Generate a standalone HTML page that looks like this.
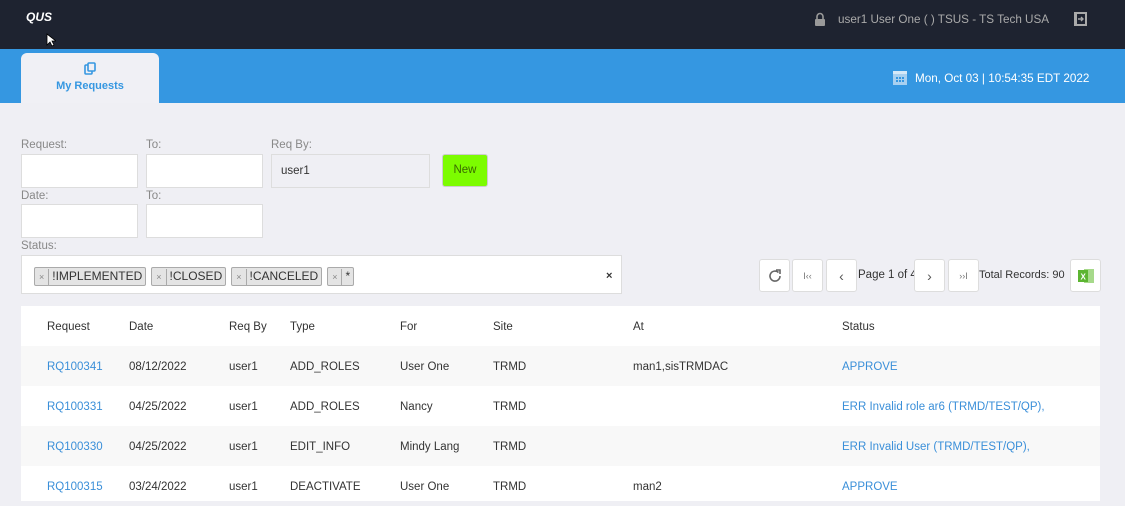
<!DOCTYPE html>
<html><head><style>
*{margin:0;padding:0;box-sizing:border-box}
body{width:1125px;height:501px;overflow:hidden;background:#efeff4;font-family:"Liberation Sans",sans-serif;font-size:11.5px;color:#333;position:relative}
.a{position:absolute}
.top{left:0;top:0;width:1125px;height:49px;background:#1e2330}
.blue{left:0;top:49px;width:1125px;height:54px;background:#3597e1}
.tab{left:21px;top:53px;width:138px;height:50px;background:#f0f0f5;border-radius:6px 6px 0 0;text-align:center;color:#3597e1;font-weight:bold;font-size:11px}
.lbl{color:#888;font-size:11.5px}
.inp{background:#fff;border:1px solid #ddd;height:34px}
.btn{background:#fff;border:1px solid #ddd;border-radius:3px;width:31px;height:33px;display:flex;align-items:center;justify-content:center;color:#555}
.tag{display:inline-block;border:1px solid #aaa;background:#e4e4e4;border-radius:2px;height:19px;line-height:17px;font-size:12px;margin-right:5px;color:#333}
.tag b{display:inline-block;font-weight:normal;color:#888;font-size:9px;padding:0 4px;border-right:1px solid #aaa}
.tag span{padding:0 3px}
table{position:absolute;left:21px;top:306px;width:1079px;border-collapse:collapse;font-size:11.5px}
td{height:40px;padding:0;color:#333;padding-top:2px}
tr:nth-child(2n) td{background:#f8f8f8}
tr td:first-child{padding-left:26px}
.lk{color:#3a8fd9}
</style></head><body>
<div class="a top"></div>
<div class="a" style="left:26px;top:10px;color:#fff;font-weight:bold;font-style:italic;font-size:12px">QUS</div>
<svg class="a" style="left:46px;top:33px" width="10" height="15"><path d="M1 1v11l3-3 2 4 2-1-2-4h4z" fill="#fff" stroke="#000" stroke-width=".8"/></svg>
<svg class="a" style="left:814px;top:12px" width="12" height="14"><path d="M3 7V4.5a3 3 0 016 0V7" fill="none" stroke="#999" stroke-width="1.6"/><rect x="1" y="7" width="10" height="7" rx="1" fill="#999"/></svg>
<div class="a" style="left:838px;top:13px;color:#aaa;font-size:11.7px">user1 User One ( ) TSUS - TS Tech USA</div>
<svg class="a" style="left:1074px;top:12px" width="13" height="14"><rect x="0" y="0" width="13" height="14" fill="#aaa"/><rect x="3" y="2" width="8" height="10" fill="#1e2330"/><path d="M4 7h5M7 5l2 2-2 2" stroke="#aaa" stroke-width="1.4" fill="none"/></svg>
<div class="a blue"></div>
<div class="a tab"><svg style="margin-top:9px" width="12" height="13"><rect x="1" y="3" width="7" height="9" rx="1" fill="none" stroke="#3597e1" stroke-width="1.6"/><rect x="4" y="1" width="7" height="8" rx="1" fill="#f0f0f5" stroke="#3597e1" stroke-width="1.6"/></svg><div style="margin-top:2px">My Requests</div></div>
<svg class="a" style="left:893px;top:71px" width="14" height="14"><rect x="0" y="0" width="14" height="14" fill="#a8d0f0"/><rect x="0" y="0" width="14" height="3" fill="#d6e9f8"/><g fill="#3597e1"><rect x="3" y="6" width="2" height="2"/><rect x="6" y="6" width="2" height="2"/><rect x="9" y="6" width="2" height="2"/><rect x="3" y="9" width="2" height="2"/><rect x="6" y="9" width="2" height="2"/><rect x="9" y="9" width="2" height="2"/></g></svg>
<div class="a" style="left:915px;top:72px;color:#fff;font-size:11.7px">Mon, Oct 03 | 10:54:35 EDT 2022</div>

<div class="a lbl" style="left:21px;top:139px">Request:</div>
<div class="a lbl" style="left:146px;top:139px">To:</div>
<div class="a lbl" style="left:271px;top:139px">Req By:</div>
<div class="a inp" style="left:21px;top:154px;width:117px"></div>
<div class="a inp" style="left:146px;top:154px;width:117px"></div>
<div class="a inp" style="left:271px;top:154px;width:159px;background:#efeff4;padding:10px 9px">user1</div>
<div class="a" style="left:442px;top:154px;width:46px;height:33px;background:#7cfc00;border:1px solid #ccc;border-radius:3px;text-align:center;line-height:31px;color:#3a6a00">New</div>
<div class="a lbl" style="left:21px;top:190px">Date:</div>
<div class="a lbl" style="left:146px;top:190px">To:</div>
<div class="a inp" style="left:21px;top:204px;width:117px"></div>
<div class="a inp" style="left:146px;top:204px;width:117px"></div>
<div class="a lbl" style="left:21px;top:240px">Status:</div>
<div class="a inp" style="left:21px;top:255px;width:601px;height:39px;padding:11px 0 0 12px">
<span class="tag"><b>×</b><span>!IMPLEMENTED</span></span><span class="tag"><b>×</b><span>!CLOSED</span></span><span class="tag"><b>×</b><span>!CANCELED</span></span><span class="tag"><b>×</b><span>*</span></span>
<span style="position:absolute;left:584px;top:14px;font-size:11px;font-weight:bold">×</span></div>

<div class="a btn" style="left:759px;top:259px"><svg width="16" height="16"><path d="M13 8A5 5 0 1 1 11.5 4.5" fill="none" stroke="#666" stroke-width="1.6"/><path d="M9 2h4v4" fill="none" stroke="#666" stroke-width="1.6"/></svg></div>
<div class="a btn" style="left:792px;top:259px;font-size:9px;color:#777">I‹‹</div>
<div class="a btn" style="left:826px;top:259px;font-size:14px">‹</div>
<div class="a" style="left:858px;top:269px">Page 1 of 4</div>
<div class="a btn" style="left:914px;top:259px;font-size:14px">›</div>
<div class="a btn" style="left:948px;top:259px;font-size:9px;color:#777">››I</div>
<div class="a" style="left:979px;top:269px;font-size:11px">Total Records: 90</div>
<div class="a btn" style="left:1070px;top:259px"><svg width="16" height="18"><rect x="6" y="2" width="10" height="14" fill="#a6d98a"/><rect x="0" y="3" width="10" height="12" fill="#5cb531"/><text x="2.5" y="12.5" font-size="8" fill="#fff" font-family="Liberation Sans" font-weight="bold">X</text></svg></div>

<div class="a" style="left:21px;top:306px;width:1079px;height:195px;background:#fff"></div>
<table>
<colgroup><col style="width:108px"><col style="width:100px"><col style="width:61px"><col style="width:110px"><col style="width:93px"><col style="width:140px"><col style="width:209px"><col></colgroup>
<tr><td>Request</td><td>Date</td><td>Req By</td><td>Type</td><td>For</td><td>Site</td><td>At</td><td>Status</td></tr>
<tr><td class="lk">RQ100341</td><td>08/12/2022</td><td>user1</td><td>ADD_ROLES</td><td>User One</td><td>TRMD</td><td>man1,sisTRMDAC</td><td class="lk">APPROVE</td></tr>
<tr><td class="lk">RQ100331</td><td>04/25/2022</td><td>user1</td><td>ADD_ROLES</td><td>Nancy</td><td>TRMD</td><td></td><td class="lk">ERR Invalid role ar6 (TRMD/TEST/QP),</td></tr>
<tr><td class="lk">RQ100330</td><td>04/25/2022</td><td>user1</td><td>EDIT_INFO</td><td>Mindy Lang</td><td>TRMD</td><td></td><td class="lk">ERR Invalid User (TRMD/TEST/QP),</td></tr>
<tr><td class="lk">RQ100315</td><td>03/24/2022</td><td>user1</td><td>DEACTIVATE</td><td>User One</td><td>TRMD</td><td>man2</td><td class="lk">APPROVE</td></tr>
</table>
</body></html>
